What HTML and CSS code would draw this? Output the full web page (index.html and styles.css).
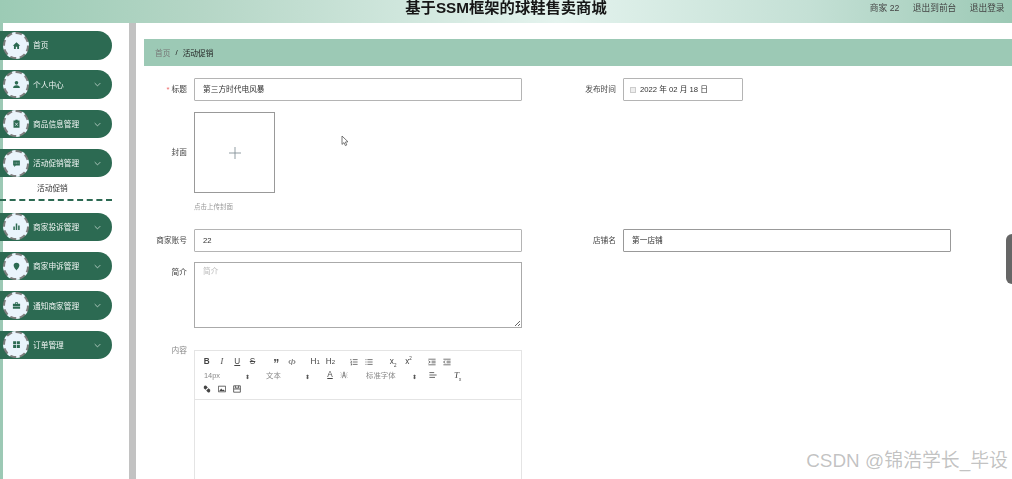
FILE: index.html
```html
<!DOCTYPE html>
<html lang="zh">
<head>
<meta charset="utf-8">
<title>基于SSM框架的球鞋售卖商城</title>
<link rel="stylesheet" href="styles.css">
</head>
<body>
<svg class="defs" width="0" height="0" aria-hidden="true">
  <symbol id="chev" viewBox="0 0 10 6"><path d="M1 1l4 4 4-4" fill="none" stroke="#cfe0d8" stroke-width="1.1"/></symbol>
</svg>
<div class="app">
  <header class="topbar">
    <h1 class="brand">基于SSM框架的球鞋售卖商城</h1>
    <nav class="topnav"><span>商家 22</span><span>退出到前台</span><span>退出登录</span></nav>
  </header>
  <div class="body">
    <aside class="side">
      <ul class="menu">
        <li class="item"><span class="badge"><svg viewBox="0 0 12 12"><path d="M6 1.5L1 6.3h1.6V10.5h2.5V7.8h1.8v2.7h2.5V6.3H11z"/></svg></span><span class="name">首页</span></li>
        <li class="item"><span class="badge"><svg viewBox="0 0 12 12"><circle cx="6" cy="3.8" r="2.4"/><path d="M1.5 10.5c0-2.5 1.5-3.6 4.5-3.6s4.5 1.1 4.5 3.6z"/></svg></span><span class="name">个人中心</span><svg class="chev"><use href="#chev"/></svg></li>
        <li class="item"><span class="badge"><svg viewBox="0 0 12 12"><path d="M2 2h2.5V1h3v1H10v9.5H2z"/><path d="M4.2 5l3.6 4M7.8 5L4.2 9" stroke="#eaf4fc" stroke-width="1" fill="none"/></svg></span><span class="name">商品信息管理</span><svg class="chev"><use href="#chev"/></svg></li>
        <li class="item"><span class="badge"><svg viewBox="0 0 12 12"><path d="M1.5 2h9v6.8H5L3 10.5V8.8H1.5z"/><path d="M3.6 5.4h.9M5.6 5.4h.9M7.6 5.4h.9" stroke="#eaf4fc" stroke-width="1"/></svg></span><span class="name">活动促销管理</span><svg class="chev"><use href="#chev"/></svg></li>
        <li class="sub">活动促销</li>
        <li class="item"><span class="badge"><svg viewBox="0 0 12 12"><path d="M1.8 6h2v4.5h-2zM5 2h2v8.5H5zM8.2 4.5h2v6h-2z"/></svg></span><span class="name">商家投诉管理</span><svg class="chev"><use href="#chev"/></svg></li>
        <li class="item"><span class="badge"><svg viewBox="0 0 12 12"><path d="M6 1a3.8 3.8 0 0 0-3.8 3.8C2.2 7.5 6 11.2 6 11.2s3.8-3.7 3.8-6.4A3.8 3.8 0 0 0 6 1z"/></svg></span><span class="name">商家申诉管理</span><svg class="chev"><use href="#chev"/></svg></li>
        <li class="item"><span class="badge"><svg viewBox="0 0 12 12"><path d="M4.2 1.8h3.6v1.7h3v3H1.2v-3h3zM5.2 2.8v.7h1.6v-.7zM1.2 7.4h9.6v3H1.2z"/></svg></span><span class="name">通知商家管理</span><svg class="chev"><use href="#chev"/></svg></li>
        <li class="item"><span class="badge"><svg viewBox="0 0 12 12"><path d="M1.5 1.5h4v4h-4zM6.5 1.5h4v4h-4zM1.5 6.5h4v4h-4zM6.5 6.5h4v4h-4z"/></svg></span><span class="name">订单管理</span><svg class="chev"><use href="#chev"/></svg></li>
      </ul>
    </aside>
    <main class="main">
      <div class="crumb"><span class="crumb-home">首页</span><b>/</b><span>活动促销</span></div>
      <form class="form">
        <div class="row row-title">
          <label class="lab"><i>*</i> 标题</label>
          <div class="box wide">第三方时代电风暴</div>
          <label class="lab lab2">发布时间</label>
          <div class="box date"><span class="cal"></span>2022 年 02 月 18 日</div>
        </div>
        <div class="row row-cover">
          <label class="lab">封面</label>
          <div class="upload"><svg viewBox="0 0 14 14"><path d="M7 0v14M0 7h14" stroke="#7f8c94" fill="none"/></svg></div>
        </div>
        <p class="hint">点击上传封面</p>
        <div class="row row-shop">
          <label class="lab">商家账号</label>
          <div class="box wide">22</div>
          <label class="lab lab2">店铺名</label>
          <div class="box name-box">第一店铺</div>
        </div>
        <div class="row row-intro">
          <label class="lab">简介</label>
          <div class="area">简介<svg class="grip" viewBox="0 0 6 6"><path d="M6 1L1 6M6 4L4 6" stroke="#666" fill="none"/></svg></div>
        </div>
        <div class="row row-content">
          <label class="lab lab-muted">内容</label>
          <div class="editor">
            <div class="tools">
              <div class="tool-row">
                <span class="t b">B</span><span class="t it">I</span><span class="t u">U</span><span class="t s">S</span>
                <span class="gap"></span>
                <span class="t q">”</span><svg class="ic" viewBox="0 0 10 10"><path d="M3 2.5L1 5l2 2.5M7 2.5L9 5 7 7.5M5.6 1.5l-1.2 7" fill="none" stroke="#444"/></svg>
                <span class="gap"></span>
                <span class="t h">H<small>1</small></span><span class="t h">H<small>2</small></span>
                <span class="gap"></span>
                <svg class="ic" viewBox="0 0 10 10"><path d="M3.5 2h6M3.5 5h6M3.5 8h6M1 1.2v1.6M1 4.2h1L1 5.8h1M1 7.2h1v1.6H1" fill="none" stroke="#444" stroke-width=".9"/></svg>
                <svg class="ic" viewBox="0 0 10 10"><path d="M3 2h6.5M3 5h6.5M3 8h6.5M.6 2h1.2M.6 5h1.2M.6 8h1.2" fill="none" stroke="#444" stroke-width=".9"/></svg>
                <span class="gap"></span>
                <span class="t x">x<sub>2</sub></span><span class="t x">x<sup>2</sup></span>
                <span class="gap"></span>
                <svg class="ic" viewBox="0 0 10 10"><path d="M.5 1.5h9M4.5 4h5M4.5 6h5M.5 8.5h9M.6 3.4L2.8 5 .6 6.6" fill="none" stroke="#444" stroke-width=".9"/></svg>
                <svg class="ic" viewBox="0 0 10 10"><path d="M.5 1.5h9M4.5 4h5M4.5 6h5M.5 8.5h9M2.8 3.4L.6 5l2.2 1.6" fill="none" stroke="#444" stroke-width=".9"/></svg>
              </div>
              <div class="tool-row row-b">
                <span class="pick p1">14px<em>⬍</em></span>
                <span class="pick p2">文本<em>⬍</em></span>
                <span class="t a">A</span>
                <svg class="ic" viewBox="0 0 10 10"><path d="M3 9L5 1l2 8M3.6 6h2.8M1 2l1 1M1 5h1M1 8l1-1M9 2L8 3M9 5H8M9 8L8 7" fill="none" stroke="#555" stroke-width=".8"/></svg>
                <span class="pick p3">标准字体<em>⬍</em></span>
                <svg class="ic al" viewBox="0 0 10 10"><path d="M.5 2h6M.5 5h9M.5 8h7" fill="none" stroke="#444"/></svg>
                <span class="t tx"><i>T</i><sub>x</sub></span>
              </div>
              <div class="tool-row row-c">
                <svg class="ic" viewBox="0 0 10 10"><path d="M1 3a2 2 0 0 1 3-2l2 2-3 3-2-2zM9 7a2 2 0 0 1-3 2L4 7l3-3 2 2z" fill="#444"/></svg>
                <svg class="ic" viewBox="0 0 10 10"><path d="M.5 1.5h9v7h-9z" fill="none" stroke="#444"/><path d="M1.5 7.5L4 4.5l2 2 1-1 1.5 2z" fill="#444"/></svg>
                <svg class="ic" viewBox="0 0 10 10"><path d="M.8 1h8.4v8H.8zM.8 5h8.4M3 1v2.8h4V1" fill="none" stroke="#444"/></svg>
              </div>
            </div>
            <div class="canvas"></div>
          </div>
        </div>
      </form>
    </main>
  </div>
</div>
<div class="tab"></div>
<svg class="pointer" viewBox="0 0 8 12"><path d="M1 1v8.4l2-1.8 1.4 3 1.4-.7L4.4 7 7 6.8z" fill="#fff" stroke="#555" stroke-width=".8"/></svg>
<div class="mark">CSDN @锦浩学长_毕设</div>
</body>
</html>
```
FILE: styles.css
```css
* { box-sizing: border-box; }
html, body { margin: 0; height: 100%; overflow: hidden; background: #fff; }
body { font-family: "Liberation Sans", "Noto Sans CJK SC", sans-serif; font-size: 7.7px; color: #333; position: relative; }
.defs { position: absolute; }
.app { width: 1012px; height: 479px; display: flex; flex-direction: column; filter: blur(.4px); }

.topbar { height: 23px; flex: none; display: flex; align-items: center; justify-content: flex-end; position: relative;
  background: linear-gradient(90deg, #9ccbb5 0%, #b5d6c6 20%, #e4f3ee 55%, #c4e0d5 80%, #9cc9b5 100%); }
.brand { position: absolute; left: 0; right: 0; top: 0; margin: 0; text-align: center; font-size: 15.3px; line-height: 16px; font-weight: 700; color: #161616; }
.topnav { display: flex; gap: 13.5px; padding-right: 7.5px; font-size: 8.7px; color: #444; line-height: 14px; margin-bottom: 8px; position: relative; }

.body { flex: 1; display: flex; min-height: 0; }
.side { width: 136px; flex: none; background: #fff; border-left: 3px solid #9cc9b5; border-right: 7px solid #c2c2c2; padding-top: 8px; }
.menu { list-style: none; margin: 0 0 0 -3px; padding: 0; width: 129px; }
.item { width: 112px; height: 28.5px; margin-bottom: 10.8px; background: #2c6a52; border-radius: 0 15px 15px 0; display: flex; align-items: center; color: #fff; position: relative; }
.badge { width: 26px; height: 27px; margin-left: 3px; flex: none; border-radius: 50%; background: #eaf4fc; border: 2.5px dashed #7d7d7d; display: flex; align-items: center; justify-content: center; }
.badge svg { width: 9px; height: 9px; fill: #2c6a52; }
.name { margin: 0 0 1px 4px; font-size: 7.7px; white-space: nowrap; color: #f1f6f4; }
.chev { position: absolute; left: 94px; top: 12px; width: 7px; height: 5px; }
.sub { position: relative; width: 112px; height: 19px; margin-top: -6px; margin-bottom: 11.5px; padding-left: 37px; line-height: 14px; color: #333; font-size: 7.7px; border-bottom: 2px dashed #2c6a52; }

.main { flex: 1; min-width: 0; padding: 16px 0 0 8px; overflow: hidden; }
.crumb { height: 27px; background: #9cc9b5; display: flex; align-items: center; gap: 5px; padding-left: 11px; color: #222; font-size: 7.7px; }
.crumb b { font-weight: 400; font-size: 8px; }
.crumb-home { color: #777; }

.form { padding-top: 12px; }
.row { display: flex; align-items: flex-start; }
.lab { width: 43px; flex: none; margin-right: 7px; text-align: right; color: #444; line-height: 23px; white-space: nowrap; }
.lab i { color: #e66; font-style: normal; }
.lab2 { width: 94px; margin-right: 7px; }
.lab-muted { color: #888; line-height: 1; }
.box { height: 23px; border: 1px solid #b4b4b4; background: #fff; line-height: 21px; padding-left: 8px; color: #333; font-size: 7.7px; border-radius: 1px; }
.wide { width: 328px; }
.date { width: 120px; display: flex; align-items: center; gap: 4px; padding-left: 6px; font-size: 7.7px; }
.cal { width: 6px; height: 6px; background: #eee; border: 1px solid #ccc; }
.name-box { width: 328px; border-color: #999; }

.row-cover { margin-top: 11px; }
.row-cover .lab { line-height: 81px; }
.upload { width: 81px; height: 81px; border: 1px solid #999; display: flex; align-items: center; justify-content: center; }
.upload svg { width: 12px; height: 12px; }
.hint { margin: 10px 0 0 50px; font-size: 6.5px; line-height: 8px; color: #999; }
.row-shop { margin-top: 18px; }
.row-intro { margin-top: 10px; }
.row-intro .lab { line-height: 22px; }
.area { width: 328px; height: 66px; border: 1px solid #aaa; padding: 4px 8px; color: #bbb; position: relative; line-height: 10px; }
.grip { position: absolute; right: 1px; bottom: 1px; width: 6px; height: 6px; }
.row-content { margin-top: 22px; }
.row-content .lab { margin-top: -4px; line-height: 10px; }
.editor { width: 328px; height: 160px; flex: none; border: 1px solid #e4e4e4; }
.tools { height: 49px; padding: 4px 0 0 4px; border-bottom: 1px solid #e4e4e4; }
.tool-row { display: flex; align-items: center; height: 13.5px; color: #444; }
.t { width: 15.3px; flex: none; font-size: 8.2px; line-height: 10px; text-align: center; }
.b { font-weight: 700; }
.it { font-style: italic; font-family: "Liberation Serif", serif; }
.u { text-decoration: underline; }
.s { text-decoration: line-through; }
.q { font-weight: 700; font-size: 12px; line-height: 14px; height: 10px; }
.h small { font-size: 6px; }
.x sub, .x sup, .tx sub { font-size: 4.5px; line-height: 0; }
.ic { width: 8px; height: 8px; flex: none; margin: 0 3.65px; }
.gap { width: 8.4px; flex: none; }
.row-b { margin-left: 5px; }
.pick { flex: none; display: flex; align-items: center; justify-content: space-between; color: #888; font-size: 7.4px; line-height: 11px; }
.pick em { font-style: normal; font-size: 6px; line-height: 6px; color: #555; padding-top: 3px; }
.p1 { width: 46px; margin-right: 16px; }
.p2 { width: 44px; margin-right: 16px; }
.p3 { width: 51px; margin-right: 12px; }
.a { text-decoration: underline; width: 8px; margin-right: 6px; }
.row-b .ic { margin: 0 18px 0 0; }
.row-b .al { margin: 0 13px 0 0; }
.tx i { font-family: "Liberation Serif", serif; font-size: 9px; }
.canvas { height: 110px; }

.tab { position: absolute; right: 0; top: 234px; width: 6px; height: 50px; background: #666; border-radius: 6px 0 0 6px; }
.pointer { position: absolute; left: 341px; top: 135px; width: 8px; height: 12px; }
.mark { position: absolute; right: 4px; top: 449px; font-size: 18.9px; line-height: 24px; color: rgba(120,120,120,.45); white-space: nowrap; text-shadow: 0 1px 0 rgba(255,255,255,.6); }
```
